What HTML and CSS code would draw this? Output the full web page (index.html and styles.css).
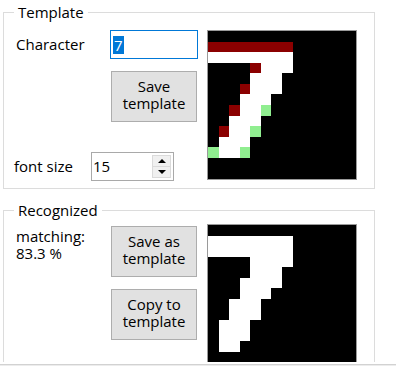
FILE: index.html
```html
<!DOCTYPE html>
<html>
<head>
<meta charset="utf-8">
<link rel="stylesheet" href="styles.css">
</head>
<body>
<div class="viewport">
  <fieldset class="group group-template">
    <legend>Template</legend>
    <div class="group-body">
      <div class="controls">
        <div class="row row-char">
          <span class="lbl lbl-char">Character</span>
          <div class="textbox"><span class="sel">7</span></div>
        </div>
        <div class="row row-save">
          <div class="btn">Save<br>template</div>
        </div>
        <div class="row row-font">
          <span class="lbl lbl-font">font size</span>
          <div class="spinner">
            <span class="spin-val">15</span>
            <div class="spin-btns">
              <span class="spin-btn"><span class="arrow-up"></span></span>
              <span class="spin-btn"><span class="arrow-down"></span></span>
            </div>
          </div>
        </div>
      </div>
      <div class="bitmap">
        <svg width="148" height="148" viewBox="0 0 14 14" shape-rendering="crispEdges">
          <rect x="0" y="0" width="14" height="14" fill="#000"/>
          <g fill="#fff">
            <rect x="0" y="2" width="8" height="1"/>
            <rect x="5" y="3" width="3" height="1"/>
            <rect x="4" y="4" width="3" height="2"/>
            <rect x="3" y="6" width="3" height="1"/>
            <rect x="3" y="7" width="2" height="1"/>
            <rect x="2" y="8" width="3" height="1"/>
            <rect x="2" y="9" width="2" height="1"/>
            <rect x="1" y="10" width="3" height="1"/>
            <rect x="1" y="11" width="2" height="1"/>
          </g>
          <g fill="#8b0000">
            <rect x="0" y="1" width="8" height="1"/>
            <rect x="4" y="3" width="1" height="1"/>
            <rect x="3" y="5" width="1" height="1"/>
            <rect x="2" y="7" width="1" height="1"/>
            <rect x="1" y="9" width="1" height="1"/>
          </g>
          <g fill="#90ee90">
            <rect x="5" y="7" width="1" height="1"/>
            <rect x="4" y="9" width="1" height="1"/>
            <rect x="0" y="11" width="1" height="1"/>
            <rect x="3" y="11" width="1" height="1"/>
          </g>
        </svg>
      </div>
    </div>
  </fieldset>

  <fieldset class="group group-recognized">
    <legend>Recognized</legend>
    <div class="group-body">
      <div class="controls controls-rec">
        <div class="match">matching:<br>83.3 %</div>
        <div class="btn-col">
          <div class="btn">Save as<br>template</div>
          <div class="btn">Copy to<br>template</div>
        </div>
      </div>
      <div class="bitmap">
        <svg width="148" height="148" viewBox="0 0 14 14" shape-rendering="crispEdges">
          <rect x="0" y="0" width="14" height="14" fill="#000"/>
          <g fill="#fff">
            <rect x="0" y="1" width="8" height="2"/>
            <rect x="4" y="3" width="4" height="1"/>
            <rect x="4" y="4" width="3" height="1"/>
            <rect x="3" y="5" width="4" height="1"/>
            <rect x="3" y="6" width="3" height="1"/>
            <rect x="2" y="7" width="3" height="2"/>
            <rect x="1" y="9" width="3" height="2"/>
            <rect x="1" y="11" width="2" height="1"/>
          </g>
        </svg>
      </div>
    </div>
  </fieldset>
</div>
<div class="rule"></div>
</body>
</html>
```

FILE: styles.css
```css
html, body {
  margin: 0;
  padding: 0;
  background: #ffffff;
}

body {
  font-family: "Open Sans", "Noto Sans", sans-serif;
  font-size: 15px;
  line-height: 17px;
  color: #000;
}

.viewport {
  height: 362px;
  overflow: hidden;
  padding-top: 2px;
  box-sizing: border-box;
}

.group {
  box-sizing: border-box;
  width: 372px;
  margin: 0 0 0 3px;
  padding: 0;
  border: 1px solid #dcdcdc;
  min-inline-size: 0;
}

.group legend {
  margin-left: 10px;
  padding: 0 4px;
  line-height: 20px;
  height: 20px;
}

.group-recognized {
  margin-top: 11px;
}

.group-body {
  display: flex;
  align-items: flex-start;
}

.group-template .group-body {
  padding: 8px 0 7px 0;
}

.group-recognized .group-body {
  padding: 4px 0 20px 0;
}

.controls {
  width: 203px;
  flex: none;
}

.row {
  display: flex;
  align-items: center;
}

.row-char {
  height: 29px;
}

.lbl-char {
  margin-left: 12px;
  width: 94px;
}

.textbox {
  box-sizing: border-box;
  width: 88px;
  height: 29px;
  border: 1px solid #0078d7;
  background: #fff;
  display: flex;
  align-items: center;
  padding-left: 2px;
}

.sel {
  background: #0078d7;
  color: #fff;
  line-height: 18px;
  padding: 0 1px;
}

.row-save {
  margin-top: 12px;
  padding-left: 107px;
}

.btn {
  box-sizing: border-box;
  width: 86px;
  height: 51px;
  background: #e1e1e1;
  border: 1px solid #adadad;
  display: flex;
  align-items: center;
  justify-content: center;
  text-align: center;
  padding-bottom: 3px;
}

.row-font {
  margin-top: 30px;
  height: 29px;
}

.lbl-font {
  margin-left: 10px;
  width: 77px;
}

.spinner {
  box-sizing: border-box;
  width: 83px;
  height: 29px;
  border: 1px solid #a9a9a9;
  background: #fff;
  display: flex;
  align-items: center;
  justify-content: space-between;
}

.spin-val {
  padding-left: 1px;
}

.spin-btns {
  width: 19px;
  height: 23px;
  margin-right: 2px;
  display: flex;
  flex-direction: column;
}

.spin-btn {
  flex: 1;
  display: flex;
  align-items: center;
  justify-content: center;
  background: #f0f0f0;
  border: 1px solid #dadada;
}

.spin-btn + .spin-btn {
  border-top: none;
}

.arrow-up {
  width: 0;
  height: 0;
  border-left: 4px solid transparent;
  border-right: 4px solid transparent;
  border-bottom: 4px solid #000;
}

.arrow-down {
  width: 0;
  height: 0;
  border-left: 4px solid transparent;
  border-right: 4px solid transparent;
  border-top: 4px solid #000;
}

.bitmap {
  box-sizing: border-box;
  width: 150px;
  height: 150px;
  border: 1px solid #9a9a9a;
  background: #000;
  flex: none;
}

.bitmap svg {
  display: block;
}

.controls-rec {
  display: flex;
  align-items: flex-start;
}

.match {
  margin-left: 12px;
  width: 95px;
  margin-top: 4px;
}

.btn-col {
  margin-top: 2px;
  display: flex;
  flex-direction: column;
  gap: 12px;
}

.rule {
  margin-top: 2px;
  height: 1px;
  background: #d2d2d2;
  border-bottom: 1px solid #ececec;
}
```
